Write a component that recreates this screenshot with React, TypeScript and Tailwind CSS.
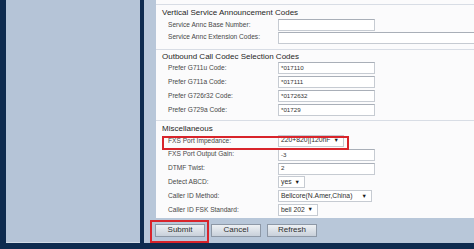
import React from "react";

const font = { fontFamily: '"Liberation Sans", Arial, sans-serif' };

function Input({ value = "", w = "w-[97px]" }: { value?: string; w?: string }) {
  return (
    <div
      className={`${w} h-[12px] shrink-0 border border-[#c6cbd2] border-t-[#a9afb8] bg-white pl-[2px] flex items-center text-[6.2px] text-[#333] leading-none`}
    >
      {value}
    </div>
  );
}

function Select({ value, w }: { value: string; w: string }) {
  return (
    <div
      className={`${w} h-[12px] shrink-0 border border-[#c6cbd2] bg-white pl-[2px] pr-[4px] flex items-center justify-between text-[6.8px] text-[#2e2e2e] leading-none`}
    >
      <span>{value}</span>
      <span className="text-[5.5px] text-[#1a1a1a]">▼</span>
    </div>
  );
}

function Row({ label, h = "h-[14px]", children }: { label: string; h?: string; children: React.ReactNode }) {
  return (
    <div className={`${h} flex items-start pl-[12px]`}>
      <div className="w-[110px] shrink-0 h-[12px] flex items-center text-[6.6px] text-[#474747] leading-none whitespace-nowrap">
        {label}
      </div>
      {children}
    </div>
  );
}

function Header({ text, h, pt }: { text: string; h: string; pt: string }) {
  return (
    <div className={`${h} ${pt} pl-[6px] flex items-center text-[8px] text-[#262626] leading-none whitespace-nowrap`}>
      {text}
    </div>
  );
}

function Line() {
  return <div className="h-[1px] bg-[#d8dde5]" />;
}

function Button({ label, w = "w-[50px]" }: { label: string; w?: string }) {
  return (
    <div
      className={`${w} h-[13px] border border-[#8d98a6] bg-gradient-to-b from-[#eef1f4] to-[#c8d0da] flex items-center justify-center text-[8px] text-[#2e2e2e] leading-none`}
    >
      {label}
    </div>
  );
}

export default function App() {
  return (
    <div style={font} className="w-[474px] h-[249px] bg-[#0e2b4f] overflow-hidden flex flex-col">
      <div className="h-[243px] flex">
        <div className="w-[6px] shrink-0" />
        <div className="w-[134px] shrink-0 bg-[#b5c4d7] border-b border-[#d3dce7]" />
        <div className="w-[4px] shrink-0" />
        <div className="flex-1 bg-[#b8c7d9] flex flex-col relative">
          <div className="h-[218px] ml-[12px] bg-[#fbfbfc] overflow-hidden flex flex-col">
            <div className="h-[4px]" />
            <Line />
            <Header text="Vertical Service Announcement Codes" h="h-[14px]" pt="pt-[2px]" />
            <Row label="Service Annc Base Number:" h="h-[13px]">
              <Input />
            </Row>
            <Row label="Service Annc Extension Codes:" h="h-[13px]">
              <Input w="w-[220px]" />
            </Row>
            <div className="h-[4px]" />
            <Line />
            <Header text="Outbound Call Codec Selection Codes" h="h-[13px]" pt="pt-[2px]" />
            <Row label="Prefer G711u Code:">
              <Input value="*017110" />
            </Row>
            <Row label="Prefer G711a Code:">
              <Input value="*017111" />
            </Row>
            <Row label="Prefer G726r32 Code:">
              <Input value="*0172632" />
            </Row>
            <Row label="Prefer G729a Code:">
              <Input value="*01729" />
            </Row>
            <div className="h-[2px]" />
            <Line />
            <Header text="Miscellaneous" h="h-[14px]" pt="pt-[2px]" />
            <Row label="FXS Port Impedance:">
              <Select value="220+820||120nF" w="w-[66px]" />
            </Row>
            <Row label="FXS Port Output Gain:">
              <Input value="-3" />
            </Row>
            <Row label="DTMF Twist:">
              <Input value="2" />
            </Row>
            <Row label="Detect ABCD:">
              <Select value="yes" w="w-[27px]" />
            </Row>
            <Row label="Caller ID Method:">
              <Select value="Bellcore(N.Amer,China)" w="w-[94px]" />
            </Row>
            <Row label="Caller ID FSK Standard:">
              <Select value="bell 202" w="w-[40px]" />
            </Row>
          </div>
          <div className="flex-1 flex items-center gap-[6px] pl-[11px] pb-[1px]">
            <Button label="Submit" />
            <Button label="Cancel" />
            <Button label="Refresh" />
          </div>
          <div className="absolute left-[18px] top-[136px] w-[187px] h-[14px] border-2 border-[#d8242b]" />
          <div className="absolute left-[6px] top-[220px] w-[59px] h-[23px] border-2 border-[#d8242b]" />
        </div>
      </div>
    </div>
  );
}
